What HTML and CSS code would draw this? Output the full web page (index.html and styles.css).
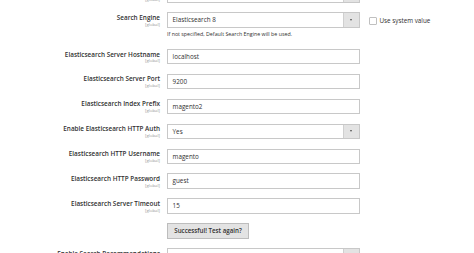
FILE: index.html
```html
<!DOCTYPE html>
<html>
<head>
<meta charset="utf-8">
<link rel="stylesheet" href="styles.css">
</head>
<body>
<div class="form">
  <div class="row">
    <div class="label"><span class="name">Minimum Terms to Match</span><span class="scope">[global]</span></div>
    <div class="control"><div class="select"><span class="value"></span><span class="arrow"></span></div></div>
  </div>
  <div class="row row-note">
    <div class="label"><span class="name">Search Engine</span><span class="scope">[global]</span></div>
    <div class="control">
      <div class="select"><span class="value">Elasticsearch 8</span><span class="arrow"></span></div>
      <p class="note">If not specified, Default Search Engine will be used.</p>
    </div>
    <label class="use-default"><span class="checkbox"></span>Use system value</label>
  </div>
  <div class="row">
    <div class="label"><span class="name">Elasticsearch Server Hostname</span><span class="scope">[global]</span></div>
    <div class="control"><div class="input">localhost</div></div>
  </div>
  <div class="row">
    <div class="label"><span class="name">Elasticsearch Server Port</span><span class="scope">[global]</span></div>
    <div class="control"><div class="input">9200</div></div>
  </div>
  <div class="row">
    <div class="label"><span class="name">Elasticsearch Index Prefix</span><span class="scope">[global]</span></div>
    <div class="control"><div class="input">magento2</div></div>
  </div>
  <div class="row">
    <div class="label"><span class="name">Enable Elasticsearch HTTP Auth</span><span class="scope">[global]</span></div>
    <div class="control"><div class="select"><span class="value">Yes</span><span class="arrow"></span></div></div>
  </div>
  <div class="row">
    <div class="label"><span class="name">Elasticsearch HTTP Username</span><span class="scope">[global]</span></div>
    <div class="control"><div class="input">magento</div></div>
  </div>
  <div class="row">
    <div class="label"><span class="name">Elasticsearch HTTP Password</span><span class="scope">[global]</span></div>
    <div class="control"><div class="input">guest</div></div>
  </div>
  <div class="row">
    <div class="label"><span class="name">Elasticsearch Server Timeout</span><span class="scope">[global]</span></div>
    <div class="control"><div class="input">15</div></div>
  </div>
  <div class="row">
    <div class="label"></div>
    <div class="control"><button class="button">Successful! Test again?</button></div>
  </div>
  <div class="row">
    <div class="label"><span class="name">Enable Search Recommendations</span><span class="scope">[global]</span></div>
    <div class="control"><div class="select"><span class="value"></span><span class="arrow"></span></div></div>
  </div>
</div>
</body>
</html>
```

FILE: styles.css
```css
html, body {
  margin: 0;
  padding: 0;
  background: #ffffff;
  overflow: hidden;
}
body {
  width: 474px;
  height: 253px;
  font-family: "Open Sans", "Liberation Sans", sans-serif;
  color: #303030;
}
.form {
  margin-top: -12.6px;
}
.row {
  display: grid;
  grid-template-columns: 160px 193px auto;
  column-gap: 7px;
  margin-bottom: 9.4px;
  align-items: start;
}
.row-note {
  margin-bottom: 10.9px;
}
.label {
  display: flex;
  flex-direction: column;
  align-items: flex-end;
  text-align: right;
  padding-top: 1.6px;
  height: 15.5px;
  box-sizing: border-box;
}
.name {
  font-size: 6.4px;
  line-height: 7px;
  font-weight: 600;
  color: #303030;
  white-space: nowrap;
}
.scope {
  font-size: 4.3px;
  line-height: 5px;
  color: #999999;
  margin-top: 0.8px;
}
.control {
  display: flex;
  flex-direction: column;
}
.input, .select {
  box-sizing: border-box;
  height: 15.5px;
  border: 1px solid #c8c8c8;
  background: #ffffff;
  font-size: 6.3px;
  line-height: 13.5px;
  padding-left: 4.6px;
  color: #303030;
  white-space: nowrap;
}
.select {
  display: flex;
  justify-content: space-between;
  padding-right: 0;
}
.arrow {
  width: 15px;
  height: 100%;
  background: #e3e3e3;
  border-left: 1px solid #d0d0d0;
  position: relative;
}
.arrow::after {
  content: "";
  position: absolute;
  left: 6px;
  top: 5.5px;
  border-left: 1.5px solid transparent;
  border-right: 1.5px solid transparent;
  border-top: 2px solid #505050;
}
.note {
  margin: 3.3px 0 0;
  font-size: 5.3px;
  line-height: 7px;
  color: #303030;
}
.use-default {
  display: flex;
  align-items: center;
  margin-left: 2px;
  margin-top: 4.6px;
  font-size: 6.3px;
  line-height: 8px;
  color: #303030;
  white-space: nowrap;
}
.checkbox {
  box-sizing: border-box;
  width: 7.5px;
  height: 7.5px;
  border: 1px solid #c0c0c0;
  border-radius: 1px;
  background: #ffffff;
  margin-right: 3px;
}
.button {
  box-sizing: border-box;
  width: 82px;
  height: 15.5px;
  padding: 0;
  border: 1px solid #bdbdbd;
  background: #e3e3e3;
  font-family: "Open Sans", "Liberation Sans", sans-serif;
  font-size: 6.2px;
  font-weight: 600;
  color: #303030;
  text-align: center;
  line-height: 13.5px;
}
```
